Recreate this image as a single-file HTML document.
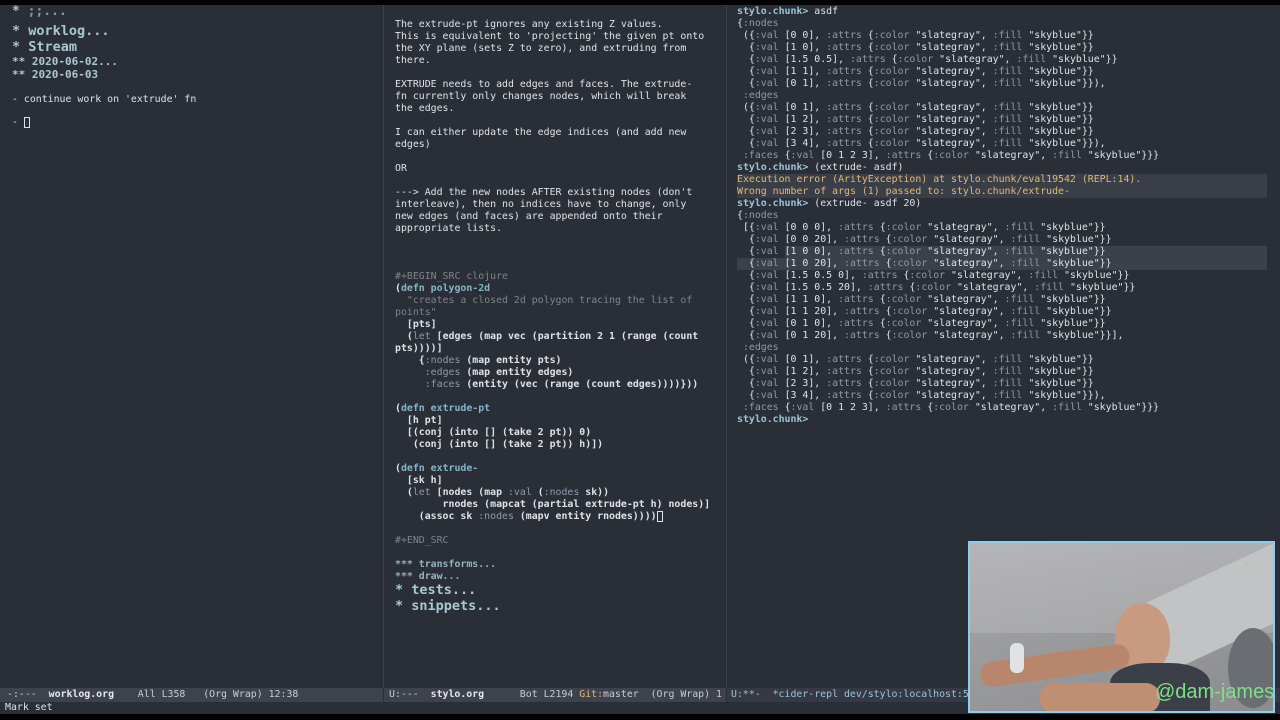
<!DOCTYPE html>
<html><head><meta charset="utf-8"><style>
html,body{margin:0;padding:0;width:1280px;height:720px;overflow:hidden;background:#000;}
#bg{position:absolute;left:0;top:5px;width:1280px;height:709px;background:#2a2e36;}
pre{margin:0;position:absolute;font-family:"DejaVu Sans Mono","Liberation Mono",monospace;font-size:9.9px;line-height:12px;color:#dfe3e8;white-space:pre;}
.k{color:#8d9aab;font-weight:normal}
.b{font-weight:bold}
.d{color:#86b6c8;font-weight:bold}
.c{color:#7d848f}
.p{color:#9cc4d8;font-weight:bold}
.h{color:#a8c8d2;font-weight:bold}
.e{color:#e2b979;}
.cur{display:inline-block;width:6px;height:11px;box-sizing:border-box;border:1px solid #dfe3e8;vertical-align:top;margin-top:0px;line-height:0}
.vl{position:absolute;top:5px;width:1px;height:683px;background:#3c414b;}
.ml{position:absolute;top:688px;height:14px;background:#3d424c;}
</style></head><body>
<div id="bg"></div>
<div class="vl" style="left:383px"></div>
<div class="vl" style="left:726px"></div>

<pre style="left:12px;top:5px;font-size:13px;line-height:14px" class="h">* <span style="color:#8a97a6">;;...</span></pre>
<pre style="left:12px;top:23px;font-size:13.5px;line-height:16px" class="h">* worklog...</pre>
<pre style="left:12px;top:39px;font-size:13.5px;line-height:16px" class="h">* Stream</pre>
<pre style="left:12px;top:55px;font-size:11px;line-height:13px" class="h">** 2020-06-02...</pre>
<pre style="left:12px;top:68px;font-size:11px;line-height:13px" class="h">** 2020-06-03</pre>
<pre style="left:12px;top:94px">- continue work on 'extrude' fn</pre>
<pre style="left:12px;top:117px">- <span class="cur"></span></pre>

<pre style="left:395px;top:19px">The extrude-pt ignores any existing Z values.
This is equivalent to 'projecting' the given pt onto
the XY plane (sets Z to zero), and extruding from
there.

EXTRUDE needs to add edges and faces. The extrude-
fn currently only changes nodes, which will break
the edges.

I can either update the edge indices (and add new
edges)

OR

---&gt; Add the new nodes AFTER existing nodes (don't
interleave), then no indices have to change, only
new edges (and faces) are appended onto their
appropriate lists.



<span class="c">#+BEGIN_SRC clojure</span>
<span class="b">(<span class="d">defn polygon-2d</span></span>
<span class="c">  "creates a closed 2d polygon tracing the list of
points"</span>
<span class="b">  [pts]
  (<span class="k">let</span> [edges (map vec (partition 2 1 (range (count
pts))))]
    {<span class="k">:nodes</span> (map entity pts)
     <span class="k">:edges</span> (map entity edges)
     <span class="k">:faces</span> (entity (vec (range (count edges))))}))

(<span class="d">defn extrude-pt</span>
  [h pt]
  [(conj (into [] (take 2 pt)) 0)
   (conj (into [] (take 2 pt)) h)])

(<span class="d">defn extrude-</span>
  [sk h]
  (<span class="k">let</span> [nodes (map <span class="k">:val</span> (<span class="k">:nodes</span> sk))
        rnodes (mapcat (partial extrude-pt h) nodes)]
    (assoc sk <span class="k">:nodes</span> (mapv entity rnodes))))</span><span class="cur"></span>

<span class="c">#+END_SRC</span>

<span class="h" style="color:#95b3c0">*** transforms...
*** draw...</span></pre>
<pre style="left:395px;top:582px;font-size:13.5px;line-height:16px" class="h">* tests...
* snippets...</pre>

<div style="position:absolute;left:737px;top:174px;width:530px;height:24px;background:#3a3e46"></div>
<div style="position:absolute;left:785px;top:246px;width:482px;height:12px;background:#3b404a"></div>
<div style="position:absolute;left:737px;top:258px;width:530px;height:12px;background:#3b404a"></div>
<pre style="left:737px;top:6px"><span class="p">stylo.chunk&gt;</span> asdf
{<span class="k">:nodes</span>
 ({<span class="k">:val</span> [0 0], <span class="k">:attrs</span> {<span class="k">:color</span> "slategray", <span class="k">:fill</span> "skyblue"}}
  {<span class="k">:val</span> [1 0], <span class="k">:attrs</span> {<span class="k">:color</span> "slategray", <span class="k">:fill</span> "skyblue"}}
  {<span class="k">:val</span> [1.5 0.5], <span class="k">:attrs</span> {<span class="k">:color</span> "slategray", <span class="k">:fill</span> "skyblue"}}
  {<span class="k">:val</span> [1 1], <span class="k">:attrs</span> {<span class="k">:color</span> "slategray", <span class="k">:fill</span> "skyblue"}}
  {<span class="k">:val</span> [0 1], <span class="k">:attrs</span> {<span class="k">:color</span> "slategray", <span class="k">:fill</span> "skyblue"}}),
 <span class="k">:edges</span>
 ({<span class="k">:val</span> [0 1], <span class="k">:attrs</span> {<span class="k">:color</span> "slategray", <span class="k">:fill</span> "skyblue"}}
  {<span class="k">:val</span> [1 2], <span class="k">:attrs</span> {<span class="k">:color</span> "slategray", <span class="k">:fill</span> "skyblue"}}
  {<span class="k">:val</span> [2 3], <span class="k">:attrs</span> {<span class="k">:color</span> "slategray", <span class="k">:fill</span> "skyblue"}}
  {<span class="k">:val</span> [3 4], <span class="k">:attrs</span> {<span class="k">:color</span> "slategray", <span class="k">:fill</span> "skyblue"}}),
 <span class="k">:faces</span> {<span class="k">:val</span> [0 1 2 3], <span class="k">:attrs</span> {<span class="k">:color</span> "slategray", <span class="k">:fill</span> "skyblue"}}}
<span class="p">stylo.chunk&gt;</span> (extrude- asdf)
<span class="e">Execution error (ArityException) at stylo.chunk/eval19542 (REPL:14).
Wrong number of args (1) passed to: stylo.chunk/extrude-</span>
<span class="p">stylo.chunk&gt;</span> (extrude- asdf 20)
{<span class="k">:nodes</span>
 [{<span class="k">:val</span> [0 0 0], <span class="k">:attrs</span> {<span class="k">:color</span> "slategray", <span class="k">:fill</span> "skyblue"}}
  {<span class="k">:val</span> [0 0 20], <span class="k">:attrs</span> {<span class="k">:color</span> "slategray", <span class="k">:fill</span> "skyblue"}}
  {<span class="k">:val</span> [1 0 0], <span class="k">:attrs</span> {<span class="k">:color</span> "slategray", <span class="k">:fill</span> "skyblue"}}
  {<span class="k">:val</span> [1 0 20], <span class="k">:attrs</span> {<span class="k">:color</span> "slategray", <span class="k">:fill</span> "skyblue"}}
  {<span class="k">:val</span> [1.5 0.5 0], <span class="k">:attrs</span> {<span class="k">:color</span> "slategray", <span class="k">:fill</span> "skyblue"}}
  {<span class="k">:val</span> [1.5 0.5 20], <span class="k">:attrs</span> {<span class="k">:color</span> "slategray", <span class="k">:fill</span> "skyblue"}}
  {<span class="k">:val</span> [1 1 0], <span class="k">:attrs</span> {<span class="k">:color</span> "slategray", <span class="k">:fill</span> "skyblue"}}
  {<span class="k">:val</span> [1 1 20], <span class="k">:attrs</span> {<span class="k">:color</span> "slategray", <span class="k">:fill</span> "skyblue"}}
  {<span class="k">:val</span> [0 1 0], <span class="k">:attrs</span> {<span class="k">:color</span> "slategray", <span class="k">:fill</span> "skyblue"}}
  {<span class="k">:val</span> [0 1 20], <span class="k">:attrs</span> {<span class="k">:color</span> "slategray", <span class="k">:fill</span> "skyblue"}}],
 <span class="k">:edges</span>
 ({<span class="k">:val</span> [0 1], <span class="k">:attrs</span> {<span class="k">:color</span> "slategray", <span class="k">:fill</span> "skyblue"}}
  {<span class="k">:val</span> [1 2], <span class="k">:attrs</span> {<span class="k">:color</span> "slategray", <span class="k">:fill</span> "skyblue"}}
  {<span class="k">:val</span> [2 3], <span class="k">:attrs</span> {<span class="k">:color</span> "slategray", <span class="k">:fill</span> "skyblue"}}
  {<span class="k">:val</span> [3 4], <span class="k">:attrs</span> {<span class="k">:color</span> "slategray", <span class="k">:fill</span> "skyblue"}}),
 <span class="k">:faces</span> {<span class="k">:val</span> [0 1 2 3], <span class="k">:attrs</span> {<span class="k">:color</span> "slategray", <span class="k">:fill</span> "skyblue"}}}
<span class="p">stylo.chunk&gt;</span></pre>

<div class="ml" style="left:0;width:383px"></div>
<div class="ml" style="left:384px;width:342px"></div>
<div class="ml" style="left:727px;width:553px;background:#343944"></div>
<pre style="left:7px;top:689px;color:#c8cdd4">-:---  <b style="color:#e6e9ed">worklog.org</b>    All L358   (Org Wrap) 12:38</pre>
<pre style="left:389px;top:689px;color:#c8cdd4">U:---  <b style="color:#e6e9ed">stylo.org</b>      Bot L2194 <span style="color:#e2b979">Git:</span>master  (Org Wrap) 1</pre>
<pre style="left:731px;top:689px;color:#9cc4d8">U:**-  *cider-repl dev/stylo:localhost:5</pre>
<pre style="left:5px;top:702px;color:#dfe3e8">Mark set</pre>

<div style="position:absolute;left:968px;top:541px;width:303px;height:168px;border:2px solid #8ecbec;overflow:hidden;background:linear-gradient(160deg,#a9aaac 0%,#9b9c9e 40%,#8b8c8e 100%)">
  <div style="position:absolute;left:0;top:0;width:303px;height:90px;background:linear-gradient(170deg,#b4b5b7,#a4a5a7)"></div>
  <div style="position:absolute;left:160px;top:30px;width:160px;height:80px;background:#c2c3c4;transform:skewY(-25deg)"></div>
  <div style="position:absolute;left:145px;top:60px;width:55px;height:70px;border-radius:50% 50% 45% 45%;background:#c99a82"></div>
  <div style="position:absolute;left:140px;top:120px;width:100px;height:50px;border-radius:40% 40% 0 0;background:#3b3f48"></div>
  <div style="position:absolute;left:10px;top:110px;width:150px;height:25px;border-radius:12px;background:#b8866d;transform:rotate(-8deg)"></div>
  <div style="position:absolute;left:70px;top:140px;width:120px;height:30px;border-radius:14px;background:#c08e73"></div>
  <div style="position:absolute;left:258px;top:85px;width:50px;height:80px;border-radius:50%;background:#6a6d72"></div>
  <div style="position:absolute;left:40px;top:100px;width:14px;height:30px;border-radius:6px;background:#e0e2e6"></div>
  <div style="position:absolute;left:185px;top:138px;white-space:nowrap;font-family:'Liberation Sans',sans-serif;font-size:20px;color:#7ee08a">@dam-james</div>
  <div style="position:absolute;left:274px;top:12px;font-family:'Liberation Sans',sans-serif;font-size:14px;color:#7ee08a">ᵕ</div>
</div>
</body></html>
